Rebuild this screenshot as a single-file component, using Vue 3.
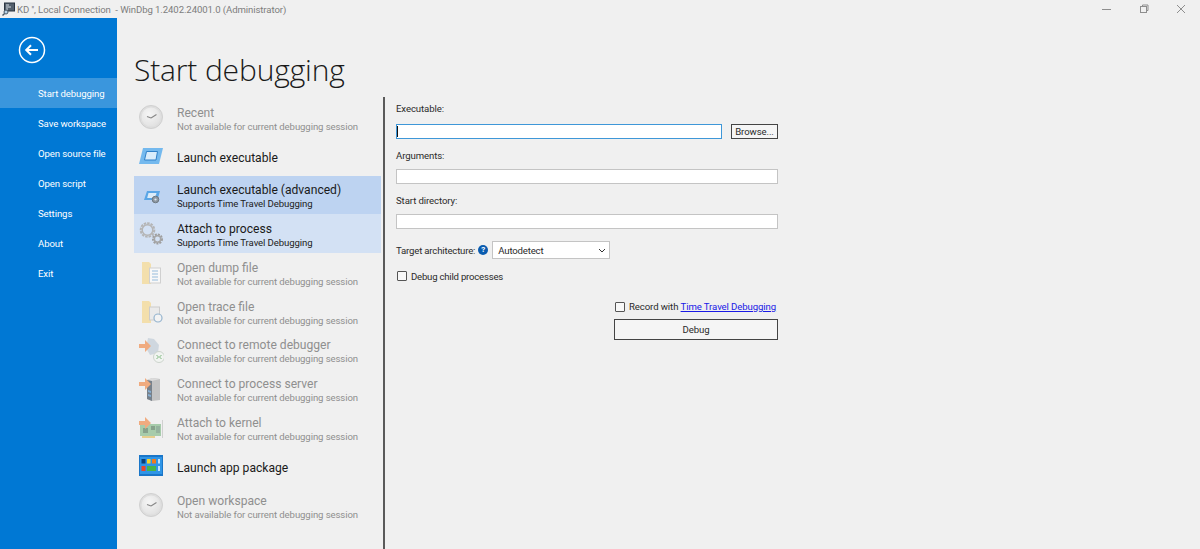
<script setup>
const nav = ['Start debugging', 'Save workspace', 'Open source file', 'Open script', 'Settings', 'About', 'Exit']

const na = 'Not available for current debugging session'
const ttd = 'Supports Time Travel Debugging'
const rows = [
  { icon: 'clock', title: 'Recent', sub: na, off: true },
  { icon: 'exe', title: 'Launch executable' },
  { icon: 'exeadv', title: 'Launch executable (advanced)', sub: ttd, tone: 'strong' },
  { icon: 'gears', title: 'Attach to process', sub: ttd, tone: 'soft' },
  { icon: 'dump', title: 'Open dump file', sub: na, off: true },
  { icon: 'trace', title: 'Open trace file', sub: na, off: true },
  { icon: 'remote', title: 'Connect to remote debugger', sub: na, off: true },
  { icon: 'server', title: 'Connect to process server', sub: na, off: true },
  { icon: 'kernel', title: 'Attach to kernel', sub: na, off: true },
  { icon: 'app', title: 'Launch app package', tone: 'tall' },
  { icon: 'clock', title: 'Open workspace', sub: na, off: true },
]
</script>

<template>
  <div class="window">
    <header class="titlebar">
      <svg class="app-icon" width="14" height="14" viewBox="0 0 14 14">
        <rect x="2" y="0.5" width="11" height="9" fill="#2b3440" />
        <rect x="3" y="1.5" width="9" height="7" fill="#55606c" />
        <path d="M4 3h3M4 5h5M4 7h2" stroke="#d5dbe2" stroke-width="1" />
        <circle cx="4" cy="10" r="2" fill="#b9d3e6" stroke="#4a5a68" />
        <path d="M2.600 11.400 0.500 13.500" stroke="#4a5a68" stroke-width="1.400" />
      </svg>
      <span class="title-text">KD '', Local Connection &nbsp;- WinDbg 1.2402.24001.0 (Administrator)</span>
      <div class="win-buttons">
        <svg width="10" height="10" viewBox="0 0 10 10"><path d="M0 5.500h9" stroke="#8e8e8e" /></svg>
        <svg width="10" height="10" viewBox="0 0 10 10" fill="none" stroke="#8e8e8e"><rect x="1.500" y="2.500" width="6" height="6" /><path d="M3.500 2.500v-1.500h5.500v5.500h-1.500" /></svg>
        <svg width="10" height="10" viewBox="0 0 10 10"><path d="M1 1l8 8M9 1l-8 8" stroke="#8e8e8e" /></svg>
      </div>
    </header>

    <div class="body">
      <aside class="sidebar">
        <div class="back">
          <svg width="28" height="28" viewBox="0 0 28 28" fill="none" stroke="#fff">
            <circle cx="14" cy="14" r="12.500" stroke-width="1.500" />
            <path d="M20 14H8.500M13 9.200 8.200 14l4.800 4.800" stroke-width="2" />
          </svg>
        </div>
        <nav class="nav">
          <div v-for="(item, i) in nav" :key="item" class="nav-item" :class="{ active: i === 0 }">{{ item }}</div>
        </nav>
      </aside>

      <main class="main">
        <h1 class="page-title">Start debugging</h1>
        <div class="columns">
          <div class="list">
            <div
              v-for="row in rows"
              :key="row.title"
              class="row"
              :class="[row.tone, { off: row.off }]"
            >
              <svg class="row-icon" width="26" height="26" viewBox="0 0 26 26">
                <defs>
                  <radialGradient id="clockface" cx="0.4" cy="0.35" r="0.75">
                    <stop offset="0" stop-color="#f8f8f8" />
                    <stop offset="1" stop-color="#dcdcdc" />
                  </radialGradient>
                </defs>
                <template v-if="row.icon === 'clock'">
                  <circle cx="13" cy="13" r="11.500" fill="#dadada" stroke="#c8c8c8" />
                  <circle cx="13" cy="13" r="9.500" fill="url(#clockface)" />
                  <path d="M13 14 9 12.500M13 14l5.500-3.500" stroke="#6e6e6e" stroke-width="1.100" fill="none" />
                </template>
                <template v-else-if="row.icon === 'exe'">
                  <path d="M5 5h20l-4 16H1z" fill="#74b9ee" />
                  <path d="M8.500 8.500h11l-1.500 8.500H6.500z" fill="#d8ecfb" stroke="#2f80c8" />
                </template>
                <template v-else-if="row.icon === 'exeadv'">
                  <path d="M9 9h13l-2.500 9H6z" fill="#5ba6e6" />
                  <path d="M10.500 11h8l-1.300 5H9.200z" fill="#dcecf9" />
                  <circle cx="17.500" cy="17.500" r="3.300" fill="#8d98a3" stroke="#6d7780" />
                  <circle cx="17.500" cy="17.500" r="1.100" fill="#dfe6ec" />
                </template>
                <template v-else-if="row.icon === 'gears'">
                  <circle cx="9.500" cy="9" r="6.800" fill="none" stroke="#b4b4b4" stroke-width="2" stroke-dasharray="2.500 1" />
                  <circle cx="9.500" cy="9" r="5.300" fill="none" stroke="#b4b4b4" stroke-width="1.500" />
                  <circle cx="19.500" cy="18" r="4.500" fill="none" stroke="#9e9e9e" stroke-width="2" stroke-dasharray="2 1" />
                  <circle cx="19.500" cy="18" r="3.200" fill="none" stroke="#a6a6a6" stroke-width="1.500" />
                </template>
                <template v-else-if="row.icon === 'dump'">
                  <path d="M4 3h7l2 2v20H4z" fill="#f4dc9c" />
                  <rect x="11.500" y="9" width="11" height="15" fill="#fafafa" stroke="#c9c9c9" />
                  <path d="M14 12h6M14 15h6M14 18h6M14 21h6" stroke="#a9c9e4" stroke-width="1.500" />
                </template>
                <template v-else-if="row.icon === 'trace'">
                  <path d="M4 3h7l2 2v20H4z" fill="#f4dc9c" />
                  <rect x="11.500" y="9" width="10" height="13" fill="#e9e9e9" stroke="#c4c4c4" />
                  <circle cx="20" cy="20" r="4" fill="#f4f4f4" stroke="#7fa6c7" stroke-width="1.200" />
                </template>
                <template v-else-if="row.icon === 'remote'">
                  <path d="M10 1l6 1 5 6-1 8-8 2-4-7z" fill="#c8d2dc" />
                  <path d="M1 7h6V3l6 6-6 6v-4H1z" fill="#f09a64" />
                  <circle cx="21" cy="20" r="5.500" fill="#f2f5f2" stroke="#c4cec4" />
                  <path d="M18.500 18l2 2-2 2M23.500 18l-2 2 2 2" stroke="#63ab63" fill="none" />
                </template>
                <template v-else-if="row.icon === 'server'">
                  <path d="M9 4l5-2 8 1v21l-8 1-5-2z" fill="#b8b8b8" />
                  <path d="M9 4l5-2 8 1-8 2z" fill="#d6d6d6" />
                  <path d="M9 4l5 1v20l-5-2z" fill="#5a6672" />
                  <path d="M10 14l3 1v2l-3-1zM10 18l3 1v2l-3-1z" fill="#6ea0cc" />
                  <path d="M1 6h6V2l6 6-6 6v-4H1z" fill="#f09a64" />
                </template>
                <template v-else-if="row.icon === 'kernel'">
                  <rect x="2" y="10" width="21" height="12" fill="#96c49a" />
                  <rect x="5" y="14" width="5" height="5" fill="#6e8f74" />
                  <rect x="13" y="12" width="4" height="4" fill="#6e8f74" />
                  <rect x="18" y="12" width="4" height="7" fill="#7fa48a" />
                  <path d="M4 22h13v2H4z" fill="#e5c878" />
                  <path d="M24.500 6v18" stroke="#c9c9c9" />
                  <path d="M1 7h6V3l6 6-6 6v-4H1z" fill="#f09a64" />
                </template>
                <template v-else-if="row.icon === 'app'">
                  <rect x="1" y="2" width="24" height="21" fill="#1a76c8" />
                  <rect x="2" y="4" width="22" height="17" fill="#2f95e6" />
                  <rect x="3.500" y="6" width="4" height="4.500" fill="#0b3f78" />
                  <rect x="9" y="6" width="3.500" height="4.500" fill="#f5d327" />
                  <rect x="14" y="6" width="4" height="4.500" fill="#f07a1c" />
                  <rect x="20" y="6" width="2" height="4.500" fill="#bfe2fa" />
                  <rect x="3.500" y="13" width="4" height="5" fill="#e8452c" />
                  <rect x="9" y="13" width="9" height="5" fill="#45b54a" />
                  <rect x="20" y="13" width="2" height="5" fill="#bfe2fa" />
                </template>
              </svg>
              <div class="row-text">
                <div class="row-title">{{ row.title }}</div>
                <div v-if="row.sub" class="row-sub">{{ row.sub }}</div>
              </div>
            </div>
          </div>

          <form class="form">
            <label class="label first">Executable:</label>
            <div class="exe-line">
              <div class="input focused"><span class="caret"></span></div>
              <div class="btn browse">Browse...</div>
            </div>
            <label class="label">Arguments:</label>
            <div class="input"></div>
            <label class="label">Start directory:</label>
            <div class="input"></div>

            <div class="arch">
              <span>Target architecture:</span>
              <span class="help">?</span>
              <div class="select">
                <span>Autodetect</span>
                <svg width="8" height="5" viewBox="0 0 8 5"><path d="M1 1l3 3 3-3" stroke="#333" fill="none" /></svg>
              </div>
            </div>

            <div class="check child"><span class="box"></span>Debug child processes</div>

            <div class="actions">
              <div class="check"><span class="box"></span>Record with&nbsp;<a class="link">Time Travel Debugging</a></div>
              <div class="btn debug">Debug</div>
            </div>
          </form>
        </div>
      </main>
    </div>
  </div>
</template>

<style>
body {
  margin: 0;
  background: #f0f0f0;
}
</style>

<style scoped>
.window {
  width: 1200px;
  height: 549px;
  display: flex;
  flex-direction: column;
  overflow: hidden;
  background: #f0f0f0;
  font-family: Roboto, "Noto Sans", sans-serif;
  font-size: 9.600px;
  letter-spacing: -0.100px;
  color: #2b2b2b;
}

.titlebar {
  height: 18px;
  flex: none;
  display: flex;
  align-items: center;
  padding-left: 2px;
}

.app-icon {
  margin-right: 1px;
}

.title-text {
  font-size: 9.600px;
  color: #7d7d7d;
}

.win-buttons {
  margin-left: auto;
  display: flex;
  gap: 27px;
  padding-right: 14px;
}

.body {
  flex: 1;
  display: flex;
  min-height: 0;
}

.sidebar {
  width: 117px;
  flex: none;
  background: #0078d4;
  color: #fff;
}

.back {
  padding: 18px 0 0 18px;
  height: 42px;
}

.nav-item {
  height: 30px;
  line-height: 32px;
  padding-left: 38px;
  font-size: 9.600px;
  white-space: nowrap;
}

.nav-item.active {
  background: #3a96dd;
}

.main {
  flex: 1;
  padding-left: 17px;
  min-width: 0;
}

.page-title {
  margin: 0;
  height: 80px;
  padding-top: 30px;
  box-sizing: border-box;
  font-size: 30px;
  font-weight: 300;
  line-height: 44px;
  letter-spacing: -0.150px;
  color: #1a1a1a;
  font-family: "Open Sans", "Noto Sans", sans-serif;
  white-space: nowrap;
}

.columns {
  display: flex;
  height: 451px;
}

.list {
  width: 249px;
  flex: none;
}

.row {
  height: 38.750px;
  margin-right: 2px;
  display: flex;
  align-items: center;
  gap: 13px;
  padding-left: 4px;
}

.row.tall {
  height: 39px;
}

.row.strong {
  background: #bdd3f1;
}

.row.soft {
  background: #d3e1f4;
}

.row-icon {
  flex: none;
}

.row.off .row-icon {
  opacity: 0.8;
}

.row-text {
  padding-top: 4px;
}

.row-title {
  font-size: 12.100px;
  line-height: 15px;
  letter-spacing: 0;
  color: #1a1a1a;
  white-space: nowrap;
}

.row-sub {
  margin-top: -1px;
  font-size: 9.600px;
  line-height: 13px;
  color: #222;
  white-space: nowrap;
}

.row.off .row-title,
.row.off .row-sub {
  color: #8f8f8f;
}

.form {
  width: 382px;
  margin-top: -1px;
  padding-left: 11px;
  border-left: 2px solid #5a5a5a;
  display: flex;
  flex-direction: column;
  align-items: stretch;
}

.label {
  height: 15px;
  line-height: 15px;
  margin: 9px 0 6px;
}

.label.first {
  margin: 4px 0 8px;
}

.exe-line {
  display: flex;
  gap: 9px;
}

.input {
  height: 15px;
  flex: none;
  box-sizing: border-box;
  background: #fff;
  border: 1px solid #c4c4c4;
  display: flex;
  align-items: center;
}

.input.focused {
  flex: 1;
  border-color: #3e97d8;
}

.caret {
  width: 1px;
  height: 11px;
  background: #111;
}

.btn {
  box-sizing: border-box;
  background: #f5f5f5;
  border: 1px solid #444;
  display: flex;
  align-items: center;
  justify-content: center;
}

.browse {
  width: 47px;
  height: 15px;
}

.arch {
  display: flex;
  align-items: center;
  margin-top: 12px;
  height: 18px;
  letter-spacing: -0.180px;
}

.help {
  width: 10px;
  height: 10px;
  margin: 0 4px 0 3px;
  border-radius: 50%;
  background: #0a5cb0;
  color: #fff;
  font-size: 8px;
  font-weight: 700;
  line-height: 10px;
  text-align: center;
}

.select {
  width: 118px;
  height: 18px;
  box-sizing: border-box;
  background: #fff;
  border: 1px solid #c4c4c4;
  display: flex;
  align-items: center;
  justify-content: space-between;
  padding: 0 3px 0 5px;
}

.check {
  display: flex;
  align-items: center;
  white-space: nowrap;
}

.child {
  margin-top: 8px;
  height: 18px;
  letter-spacing: -0.220px;
}

.box {
  width: 10px;
  height: 10px;
  flex: none;
  box-sizing: border-box;
  margin: 0 4px 0 1px;
  background: #f8f8f8;
  border: 1px solid #555;
  border-radius: 1px;
}

.actions {
  margin-top: 16px;
  align-self: flex-end;
  width: 164px;
  display: flex;
  flex-direction: column;
}

.link {
  color: #1a1ae6;
  text-decoration: underline;
}

.debug {
  margin-top: 7px;
  height: 21px;
}
</style>
